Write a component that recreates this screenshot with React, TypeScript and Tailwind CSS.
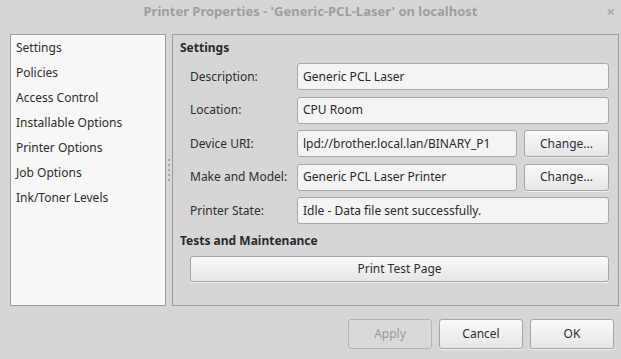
import React from 'react';

const pages = [
    'Settings',
    'Policies',
    'Access Control',
    'Installable Options',
    'Printer Options',
    'Job Options',
    'Ink/Toner Levels',
];

const btn =
    'h-full rounded-[3px] border border-[#a6a6a6] bg-gradient-to-b from-[#fafafa] to-[#e6e6e6] text-[12px] text-[#2e2e2e] shadow-[0_1px_0_rgba(255,255,255,0.6)]';

const Field: React.FC<{ label: string; value: string; change?: boolean }> = ({ label, value, change }) => (
    <div className="flex h-[27px] items-center">
        <div className="w-[107px] shrink-0 text-[12px] text-[#2e2e2e]">{label}</div>
        <div className="flex h-full flex-1 items-center gap-[7px]">
            <div className="flex h-full flex-1 items-center rounded-[3px] border border-[#a8a8a8] bg-[#f4f4f4] px-[5px] text-[12px] text-[#2a2a2a]">
                {value}
            </div>
            {change && <button className={`${btn} w-[85px]`}>Change...</button>}
        </div>
    </div>
);

export default function App() {
    return (
        <div
            className="flex h-[359px] w-[621px] flex-col overflow-hidden bg-[#d6d6d6]"
            style={{ fontFamily: '"Noto Sans", sans-serif' }}
        >
            {/* title bar */}
            <div className="relative flex h-[24px] shrink-0 items-center justify-center">
                <span className="text-[13px] font-bold text-[#9e9e9e]">
                    Printer Properties - 'Generic-PCL-Laser' on localhost
                </span>
                <span className="absolute right-[6px] top-[2px] text-[15px] font-bold leading-[18px] text-[#a8a8a8]">×</span>
            </div>

            {/* body */}
            <div className="mt-[10px] flex h-[272px] shrink-0 pl-[10px] pr-[2px]">
                <div className="h-full w-[156px] shrink-0 border border-[#9c9c9c] bg-[#f7f7f7] pl-[5px]">
                    {pages.map((p) => (
                        <div key={p} className="flex h-[25px] items-center text-[12px] text-[#2e2e2e]">
                            {p}
                        </div>
                    ))}
                </div>

                {/* splitter */}
                <div className="flex w-[6px] shrink-0 flex-col items-center justify-center gap-[3px]">
                    {[0, 1, 2, 3, 4].map((i) => (
                        <div key={i} className="h-[2px] w-[2px] bg-[#a9a9a9]" />
                    ))}
                </div>

                <div className="flex h-full flex-1 flex-col border border-[#9c9c9c] pl-[7px] pr-[9px] pt-[4px]">
                    <div className="h-[18px] text-[12px] font-bold leading-[18px] text-[#2a2a2a]">Settings</div>
                    <div className="ml-[10px] mt-[6px] flex flex-col gap-[6.5px]">
                        <Field label="Description:" value="Generic PCL Laser" />
                        <Field label="Location:" value="CPU Room" />
                        <Field label="Device URI:" value="lpd://brother.local.lan/BINARY_P1" change />
                        <Field label="Make and Model:" value="Generic PCL Laser Printer" change />
                        <Field label="Printer State:" value="Idle - Data file sent successfully." />
                    </div>
                    <div className="mt-[8px] h-[18px] text-[12px] font-bold leading-[18px] text-[#2a2a2a]">
                        Tests and Maintenance
                    </div>
                    <div className="ml-[10px] mt-[5px] h-[26px]">
                        <button className={`${btn} w-full`}>Print Test Page</button>
                    </div>
                </div>
            </div>

            {/* dialog buttons */}
            <div className="mt-[13px] flex h-[30px] justify-end gap-[7px] pr-[7px]">
                <button className="h-full w-[84px] rounded-[3px] border border-[#b4b4b4] bg-[#d9d9d9] text-[12px] text-[#9a9a9a]">
                    Apply
                </button>
                <button className={`${btn} w-[84px]`}>Cancel</button>
                <button className={`${btn} w-[84px]`}>OK</button>
            </div>
        </div>
    );
}
